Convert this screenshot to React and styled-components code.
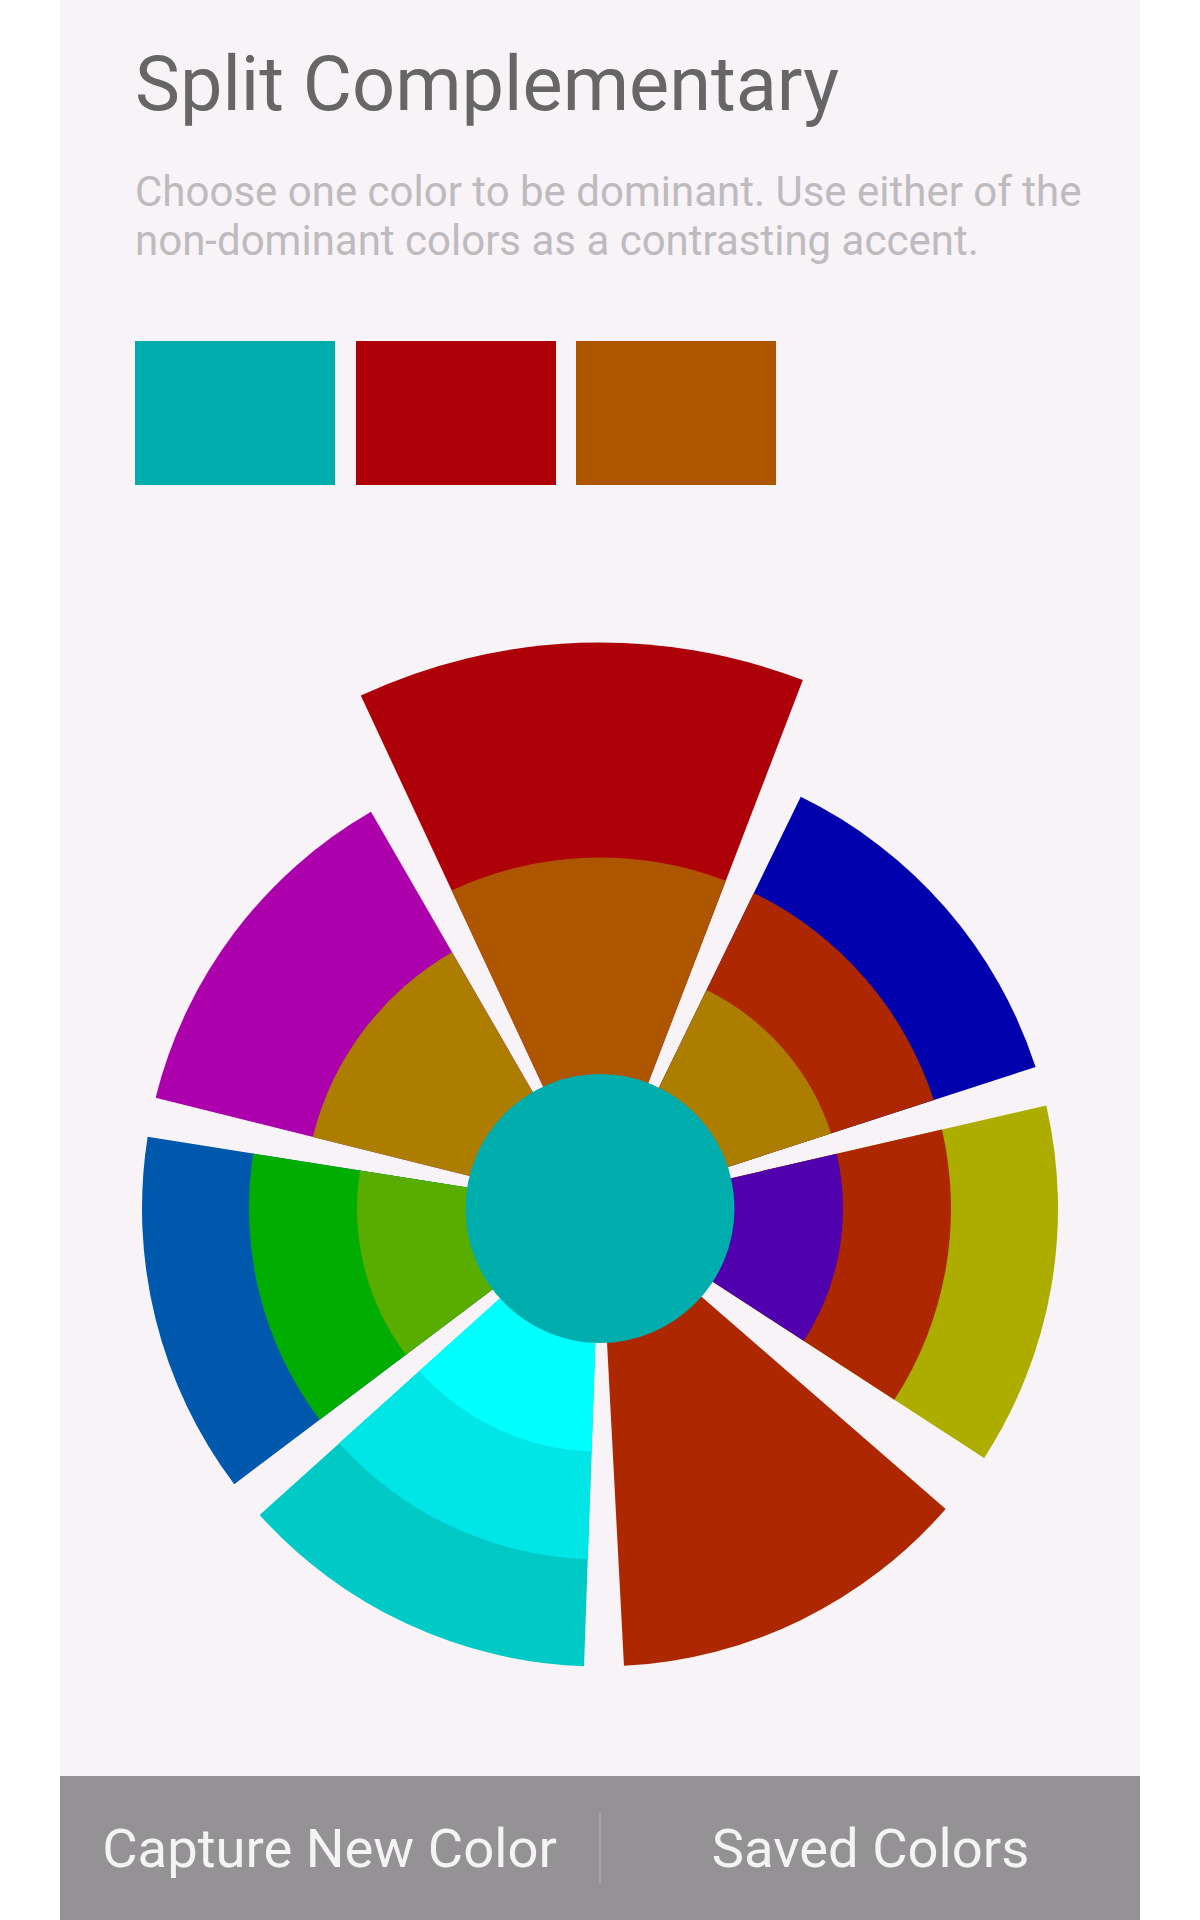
import React from "react";
import styled, { createGlobalStyle } from "styled-components";

const GlobalStyle = createGlobalStyle`
    html, body {
        margin: 0;
        padding: 0;
        background: #ffffff;
    }
    * {
        box-sizing: border-box;
    }
`;

const Screen = styled.div`
    width: 1080px;
    height: 1920px;
    margin: 0 auto;
    display: flex;
    flex-direction: column;
    font-family: Roboto, "Noto Sans", sans-serif;
`;
const Content = styled.main`
    flex: 1;
    display: flex;
    flex-direction: column;
    background-color: #f7f3f7;
`;
const Intro = styled.section`
    padding: 40px 40px 0 75px;
`;
const Title = styled.h1`
    margin: 0;
    font-size: 75.7px;
    line-height: 88px;
    font-weight: 400;
    color: #666666;
`;
const Description = styled.p`
    margin: 39px 0 0;
    font-size: 42px;
    line-height: 49px;
    color: #bdbbbd;
`;
const SwatchRow = styled.div`
    display: flex;
    gap: 20.5px;
    margin-top: 76px;
`;
const Swatch = styled.div`
    width: 200px;
    height: 144px;
    background-color: ${props => props.color};
`;
const WheelArea = styled.div`
    flex: 1;
    display: flex;
    justify-content: center;
`;
const BottomBar = styled.nav`
    height: 144px;
    display: flex;
    align-items: center;
    background-color: #949294;
`;
const NavButton = styled.button`
    flex: 1;
    height: 100%;
    border: none;
    padding: 0;
    background: transparent;
    font-family: Roboto, "Noto Sans", sans-serif;
    font-size: 54.4px;
    color: #f4f4f4;
    cursor: pointer;
`;
const Divider = styled.div`
    width: 2px;
    height: 72px;
    background-color: #a6a4a6;
`;

const swatches = ["#00adad", "#ad0008", "#ad5500"];

// angles in degrees, counter-clockwise from 3 o'clock
const sectors = [
    { from: 69, to: 115, rings: [[566, "#ad0008"], [351, "#ad5500"]] },
    { from: 18, to: 64, rings: [[458, "#0000ad"], [351, "#ad2800"], [243, "#ad7d00"]] },
    { from: -33, to: 13, rings: [[458, "#adad00"], [351, "#ad2800"], [243, "#5000ad"]] },
    { from: -87, to: -41, rings: [[458, "#ad2800"]] },
    { from: -138, to: -92, rings: [[458, "#00c9c6"], [351, "#00e5e5"], [243, "#00ffff"]] },
    { from: 171, to: 217, rings: [[458, "#0058ad"], [351, "#00ad00"], [243, "#58ad00"]] },
    { from: 120, to: 166, rings: [[458, "#ad00ad"], [296, "#ad7d00"]] }
];

const CX = 540;
const CY = 723.5;

const point = (deg, r) => {
    const a = (deg * Math.PI) / 180;
    return [CX + r * Math.cos(a), CY - r * Math.sin(a)];
};

const slicePath = (from, to, r) => {
    const [x1, y1] = point(from, r);
    const [x2, y2] = point(to, r);
    return `M ${CX} ${CY} L ${x1} ${y1} A ${r} ${r} 0 0 0 ${x2} ${y2} Z`;
};

function ColorWheel() {
    return (
        <svg width="1080" height="1291" viewBox="0 0 1080 1291">
            {sectors.map((s, i) =>
                s.rings.map(([r, color]) => (
                    <path key={i + "-" + r} d={slicePath(s.from, s.to, r)} fill={color} />
                ))
            )}
            <circle cx={CX} cy={CY} r="134.5" fill="#00adad" />
        </svg>
    );
}

function App() {
    return (
        <Screen>
            <GlobalStyle />
            <Content>
                <Intro>
                    <Title>Split Complementary</Title>
                    <Description>
                        Choose one color to be dominant. Use either of the
                        non-dominant colors as a contrasting accent.
                    </Description>
                    <SwatchRow>
                        {swatches.map(c => (
                            <Swatch key={c} color={c} />
                        ))}
                    </SwatchRow>
                </Intro>
                <WheelArea>
                    <ColorWheel />
                </WheelArea>
            </Content>
            <BottomBar>
                <NavButton>Capture New Color</NavButton>
                <Divider />
                <NavButton>Saved Colors</NavButton>
            </BottomBar>
        </Screen>
    );
}

export default App;
